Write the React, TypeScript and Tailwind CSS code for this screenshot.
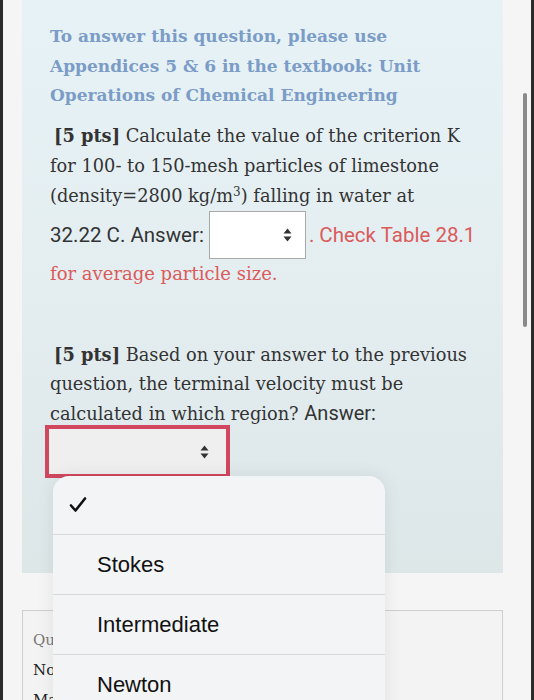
import React from 'react';

const serif = "font-['DejaVu_Serif',serif]";
const sans = "font-['Roboto','Liberation_Sans',sans-serif]";

function SortArrows({ className = '' }: { className?: string }) {
  return (
    <svg className={className} width="9" height="14" viewBox="0 0 9 14" fill="#333">
      <path d="M4.5 0.5 L8.5 5.5 L0.5 5.5 Z" />
      <path d="M4.5 13.5 L8.5 8.5 L0.5 8.5 Z" />
    </svg>
  );
}

const OPTIONS = ['Stokes', 'Intermediate', 'Newton'];

export default function App() {
  return (
    <div className="relative w-[534px] h-[700px] overflow-hidden bg-[#f5f5f5] border-l-[3px] border-r-[3px] border-[#2b2b2b]">
      <div className="pl-[19px] w-[500px]">
        {/* question panel */}
        <div className="bg-linear-to-b from-[#e7f2f6] via-[#e4eef1] to-[#dde7e8] px-[28px] pt-[22px] pb-[95px]">
          <p className={`${serif} font-bold text-[17px] leading-[29.5px] text-[#7b9cc7]`}>
            To answer this question, please use
            <br />
            Appendices 5 &amp; 6 in the textbook: Unit
            <br />
            Operations of Chemical Engineering
          </p>

          <div className={`${serif} mt-[10px] text-[17.8px] leading-[30px] text-[#333]`}>
            <span className="ml-[4px] font-bold">[5 pts]</span> Calculate the value of the criterion K
            <br />
            for 100- to 150-mesh particles of limestone
            <br />
            (density=2800 kg/m<sup className="text-[12px]">3</sup>) falling in water at
            <div className="flex items-center h-[48px] whitespace-nowrap -mr-[40px]">
              <span className={`${sans} shrink-0 text-[20.5px]`}>32.22 C. Answer:</span>
              <div className="shrink-0 ml-[5px] w-[97px] h-[48px] bg-white border border-[#a9a9a9] flex items-center justify-end pr-[13px]">
                <SortArrows />
              </div>
              <span className={`${sans} shrink-0 ml-[3px] text-[20.5px] text-[#db5a5a]`}>. Check Table 28.1</span>
            </div>
            <span className="text-[18px] text-[#db5a5a]">for average particle size.</span>
          </div>

          <div className={`${serif} mt-[51px] text-[17.8px] leading-[29.5px] text-[#333]`}>
            <span className="ml-[4px] font-bold">[5 pts]</span> Based on your answer to the previous
            <br />
            question, the terminal velocity must be
            <br />
            calculated in which region? <span className={`${sans} text-[20px]`}>Answer:</span>
          </div>
          <div className="-ml-[5px] mt-[-3px] w-[185px] h-[53px] bg-[#efefef] border-[4px] border-[#d0475f] flex items-center justify-end pr-[17px]">
            <SortArrows />
          </div>
        </div>

        {/* question info box */}
        <div className="mt-[37px] h-[120px] border border-[#cfcfcf] bg-[#f3f3f3] px-[10px] pt-[14px]">
          <div className={`${serif} text-[15px] leading-[30px] text-[#777]`}>Question 2</div>
          <div className={`${serif} text-[15px] leading-[30px] text-[#222]`}>Not yet answered</div>
          <div className={`${serif} text-[15px] leading-[30px] text-[#222]`}>Marked out of 5.00</div>
        </div>
      </div>

      {/* scrollbar */}
      <div className="absolute left-[520px] top-[93px] w-[4px] h-[234px] rounded-full bg-[#8a8a8a]" />

      {/* native select popup */}
      <div className="absolute left-[50px] top-[476px] w-[332px] h-[260px] rounded-t-[16px] bg-[#f3f4f5] shadow-[0_0_18px_rgba(0,0,0,0.08)] overflow-hidden font-['Liberation_Sans',sans-serif]">
        <div className="h-[59px] border-b border-[#d8d8d8] relative">
          <svg className="absolute left-[16px] top-[21px]" width="18" height="16" viewBox="0 0 18 16" fill="none">
            <path d="M2 8.5 L6.5 13.5 L16 1.5" stroke="#111" strokeWidth="2.6" strokeLinecap="round" strokeLinejoin="round" />
          </svg>
        </div>
        {OPTIONS.map((opt) => (
          <div key={opt} className="h-[60px] border-b border-[#d8d8d8] flex items-center pl-[44px] text-[22px] text-[#111]">
            {opt}
          </div>
        ))}
      </div>
    </div>
  );
}
